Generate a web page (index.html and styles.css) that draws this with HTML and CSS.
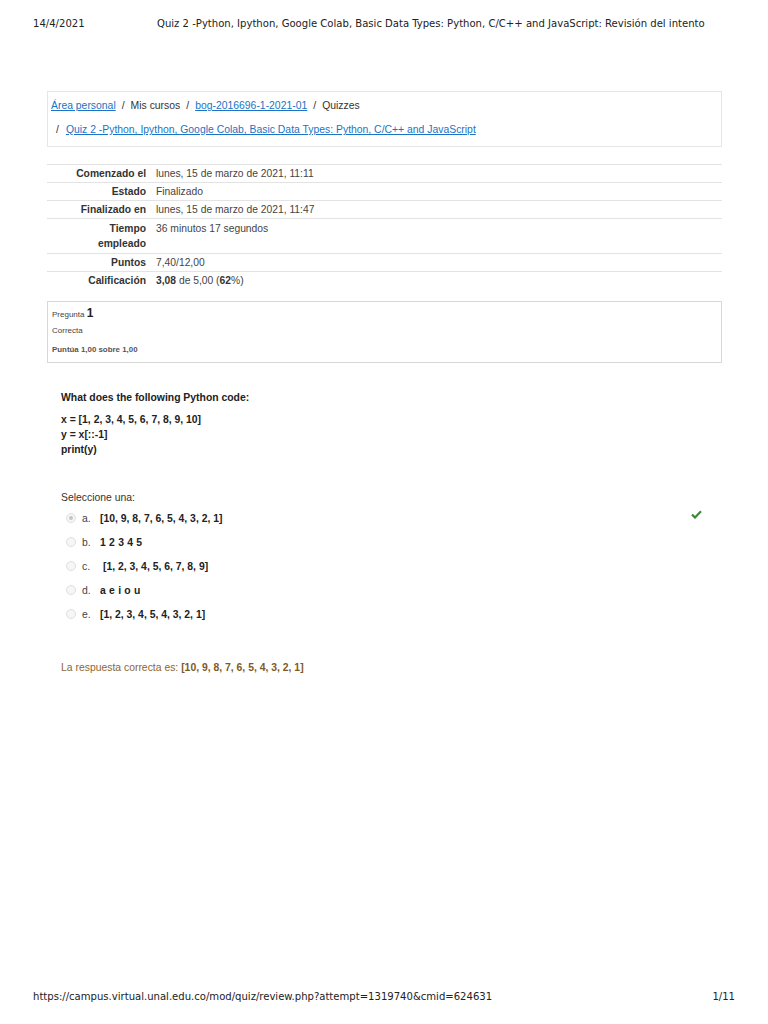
FILE: index.html
```html
<!DOCTYPE html>
<html lang="es">
<head>
<meta charset="utf-8">
<title>Revisión del intento</title>
<link rel="stylesheet" href="styles.css">
</head>
<body>
<div class="page">
  <header class="print-head">
    <span class="date">14/4/2021</span>
    <span class="doc-title">Quiz 2 -Python, Ipython, Google Colab, Basic Data Types: Python, C/C++ and JavaScript: Revisión del intento</span>
  </header>

  <main class="content">
    <nav class="crumbs">
      <div class="crumb-line"><a href="#">Área personal</a><span class="sep">/</span><span>Mis cursos</span><span class="sep">/</span><a href="#">bog-2016696-1-2021-01</a><span class="sep">/</span><span>Quizzes</span></div>
      <div class="crumb-line indent"><span class="sep first">/</span><a href="#">Quiz 2 -Python, Ipython, Google Colab, Basic Data Types: Python, C/C++ and JavaScript</a></div>
    </nav>

    <div class="summary">
      <div class="row"><div class="lbl">Comenzado el</div><div class="val">lunes, 15 de marzo de 2021, 11:11</div></div>
      <div class="row"><div class="lbl">Estado</div><div class="val">Finalizado</div></div>
      <div class="row"><div class="lbl">Finalizado en</div><div class="val">lunes, 15 de marzo de 2021, 11:47</div></div>
      <div class="row tall"><div class="lbl">Tiempo<br>empleado</div><div class="val">36 minutos 17 segundos</div></div>
      <div class="row"><div class="lbl">Puntos</div><div class="val">7,40/12,00</div></div>
      <div class="row last"><div class="lbl">Calificación</div><div class="val"><b>3,08</b> de 5,00 (<b>62</b>%)</div></div>
    </div>

    <div class="qinfo">
      <div class="qno">Pregunta <span class="num">1</span></div>
      <div class="qstate">Correcta</div>
      <div class="qgrade">Puntúa 1,00 sobre 1,00</div>
    </div>

    <section class="question">
      <p class="qtext">What does the following Python code:</p>
      <p class="code">x = [1, 2, 3, 4, 5, 6, 7, 8, 9, 10]<br>y = x[::-1]<br>print(y)</p>

      <p class="prompt">Seleccione una:</p>
      <div class="answers">
        <div class="opt"><span class="radio checked"></span><span class="letter">a.</span><span class="atext">[10, 9, 8, 7, 6, 5, 4, 3, 2, 1]</span>
          <svg class="tick" width="11" height="9" viewBox="0 0 11 9"><path d="M1 4.6 L4 7.5 L10 1.3" fill="none" stroke="#3d8b37" stroke-width="2.2"/></svg>
        </div>
        <div class="opt"><span class="radio"></span><span class="letter">b.</span><span class="atext spaced">1 2 3 4 5</span></div>
        <div class="opt"><span class="radio"></span><span class="letter">c.</span><span class="atext pad">[1, 2, 3, 4, 5, 6, 7, 8, 9]</span></div>
        <div class="opt"><span class="radio"></span><span class="letter">d.</span><span class="atext spaced">a e i o u</span></div>
        <div class="opt"><span class="radio"></span><span class="letter">e.</span><span class="atext">[1, 2, 3, 4, 5, 4, 3, 2, 1]</span></div>
      </div>

      <p class="rightanswer">La respuesta correcta es: <b>[10, 9, 8, 7, 6, 5, 4, 3, 2, 1]</b></p>
    </section>
  </main>

  <footer class="print-foot">
    <span>https://campus.virtual.unal.edu.co/mod/quiz/review.php?attempt=1319740&amp;cmid=624631</span>
    <span>1/11</span>
  </footer>
</div>
</body>
</html>
```

FILE: styles.css
```css
* { box-sizing: border-box; }
html, body { margin: 0; padding: 0; background: #fff; }
body { font-family: "Liberation Sans", Arial, sans-serif; color: #333; }

.page {
  width: 768px;
  min-height: 1024px;
  display: flex;
  flex-direction: column;
}

.print-head, .print-foot {
  font-family: "DejaVu Sans Condensed", "DejaVu Sans", sans-serif;
  font-stretch: condensed;
  font-size: 11.2px;
  color: #222;
  display: flex;
  padding: 0 33px;
}
.print-head { padding-top: 17px; line-height: 14px; }
.print-head .date { width: 124px; }
.print-foot {
  margin-top: auto;
  justify-content: space-between;
  padding-bottom: 20px;
  line-height: 14px;
}

.content { padding: 0 46px 0 47px; margin-top: 60px; }

.crumbs {
  border: 1px solid #e6e6e6;
  padding: 2px 3px 4px;
  font-size: 10.4px;
  line-height: 24px;
  color: #333;
}
.crumbs a { color: #1a73c6; text-decoration: underline; }
.crumb-line { display: flex; }
.crumb-line .sep { margin: 0 6px; }
.crumb-line.indent { padding-left: 1px; }
.crumb-line .sep.first { margin: 0 7px 0 4px; }

.summary { margin-top: 17px; font-size: 10.3px; line-height: 15px; }
.summary .row {
  display: grid;
  grid-template-columns: 103px 1fr;
  border-top: 1px solid #e3e3e3;
  padding: 1px 0 1px;
}
.summary .row.tall { padding: 2px 0 2px; }
.summary .lbl { font-weight: bold; text-align: right; padding-right: 4px; }
.summary .val { padding-left: 6px; color: #444; }
.summary .val b { color: #333; }

.qinfo {
  margin-top: 12px;
  border: 1px solid #d8d8d8;
  padding: 4px 4px 6px;
  height: 62px;
  font-size: 8px;
  color: #444;
}
.qno { line-height: 14px; }
.qno .num { font-size: 12px; font-weight: bold; color: #222; }
.qstate { margin-top: 3px; line-height: 12px; }
.qgrade { margin-top: 7px; line-height: 12px; font-weight: bold; color: #555; font-size: 7.9px; }

.question { padding: 0 14px; font-size: 10.4px; }
.question p { margin: 0; }
.qtext { margin-top: 27px !important; font-weight: bold; line-height: 15px; color: #222; }
.code { margin-top: 7px !important; font-weight: bold; line-height: 15px; color: #222; }
.prompt { margin-top: 33px !important; line-height: 15px; }

.answers { margin-top: 1px; }
.opt {
  display: flex;
  align-items: center;
  height: 24px;
  padding-left: 5px;
  position: relative;
}
.radio {
  width: 10px;
  height: 10px;
  border-radius: 50%;
  border: 1px solid #e0e0e0;
  background: #f6f6f6;
  position: relative;
}
.radio.checked::after {
  content: "";
  position: absolute;
  left: 2px; top: 2px;
  width: 4px; height: 4px;
  border-radius: 50%;
  background: #c4c4c4;
}
.letter { margin-left: 6px; width: 18px; color: #444; }
.atext { font-weight: bold; color: #222; }
.atext.pad { padding-left: 3px; }
.atext.spaced { letter-spacing: 0.2px; }
.tick { position: absolute; left: 630px; top: 4px; }

.rightanswer { margin-top: 34px !important; color: #8e662e; line-height: 15px; }
.rightanswer b { color: #7d5a26; }
```
